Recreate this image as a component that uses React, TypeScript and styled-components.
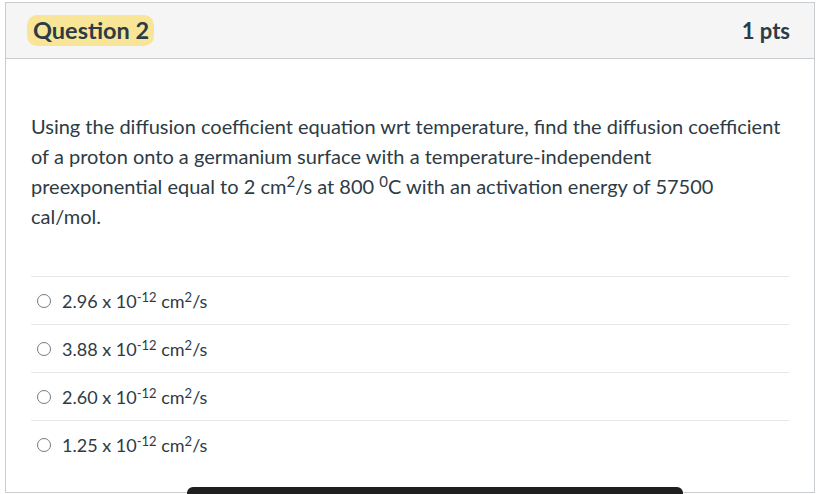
import React from "react";
import styled, { createGlobalStyle } from "styled-components";

const GlobalStyle = createGlobalStyle`
  html, body {
    margin: 0;
    padding: 0;
    background: #ffffff;
    font-family: Lato, "Open Sans", sans-serif;
    color: #2d3b45;
    overflow: hidden;
  }
`;

const Page = styled.div`
  width: 818px;
  height: 494px;
  padding: 2px 3px 0 5px;
  box-sizing: border-box;
`;

const Panel = styled.section`
  height: 491px;
  box-sizing: border-box;
  border: 1px solid #c7cdd1;
  display: flex;
  flex-direction: column;
`;

const Header = styled.header`
  height: 56px;
  box-sizing: border-box;
  background: #f5f5f5;
  border-bottom: 1px solid #c7cdd1;
  display: flex;
  align-items: center;
  justify-content: space-between;
  padding: 0 24px 0 21px;
`;

const Title = styled.h2`
  margin: 0;
  font-size: 23.5px;
  font-weight: 700;
  line-height: 31px;
  padding: 0 5px 0 6px;
  background: #f8e598;
  border-radius: 10px;
  color: #2d3b45;
`;

const Points = styled.div`
  font-size: 22px;
  font-weight: 700;
  color: #2d3b45;
`;

const Body = styled.div`
  padding: 52px 22px 0 25px;
`;

const Prompt = styled.p`
  margin: 0 3px 45px 0;
  font-size: 20px;
  line-height: 30px;
  color: #2d3b45;

  sup {
    font-size: 15px;
    line-height: 0;
    vertical-align: 7px;
  }
`;

const Answers = styled.div`
  display: flex;
  flex-direction: column;
  margin-right: 3px;
`;

const Answer = styled.label`
  height: 48px;
  box-sizing: border-box;
  border-top: 1px solid #e5e7e9;
  display: flex;
  align-items: center;
  gap: 11px;
  padding: 1px 0 0 6px;
  font-size: 18px;
  color: #2d3b45;

  sup {
    font-size: 13px;
    line-height: 0;
    vertical-align: 6px;
  }
`;

const Radio = styled.span`
  width: 14px;
  height: 14px;
  box-sizing: border-box;
  border: 1.5px solid #6f7c86;
  border-radius: 50%;
  flex-shrink: 0;
`;

const BottomBar = styled.div`
  position: fixed;
  left: 187px;
  bottom: -20px;
  width: 496px;
  height: 27px;
  background: #1f1f1f;
  border-radius: 6px;
`;

const answers = ["2.96", "3.88", "2.60", "1.25"];

export default function App() {
  return (
    <>
      <GlobalStyle />
      <Page>
        <Panel>
          <Header>
            <Title>Question 2</Title>
            <Points>1 pts</Points>
          </Header>
          <Body>
            <Prompt>
              Using the diffusion coefficient equation wrt temperature, find the diffusion coefficient
              of a proton onto a germanium surface with a temperature-independent
              <br />
              preexponential equal to 2 cm<sup>2</sup>/s at 800 <sup>0</sup>C with an activation energy of 57500
              <br />
              cal/mol.
            </Prompt>
            <Answers>
              {answers.map((a) => (
                <Answer key={a}>
                  <Radio />
                  <span>
                    {a} x 10<sup>-12</sup> cm<sup>2</sup>/s
                  </span>
                </Answer>
              ))}
            </Answers>
          </Body>
        </Panel>
      </Page>
      <BottomBar />
    </>
  );
}
